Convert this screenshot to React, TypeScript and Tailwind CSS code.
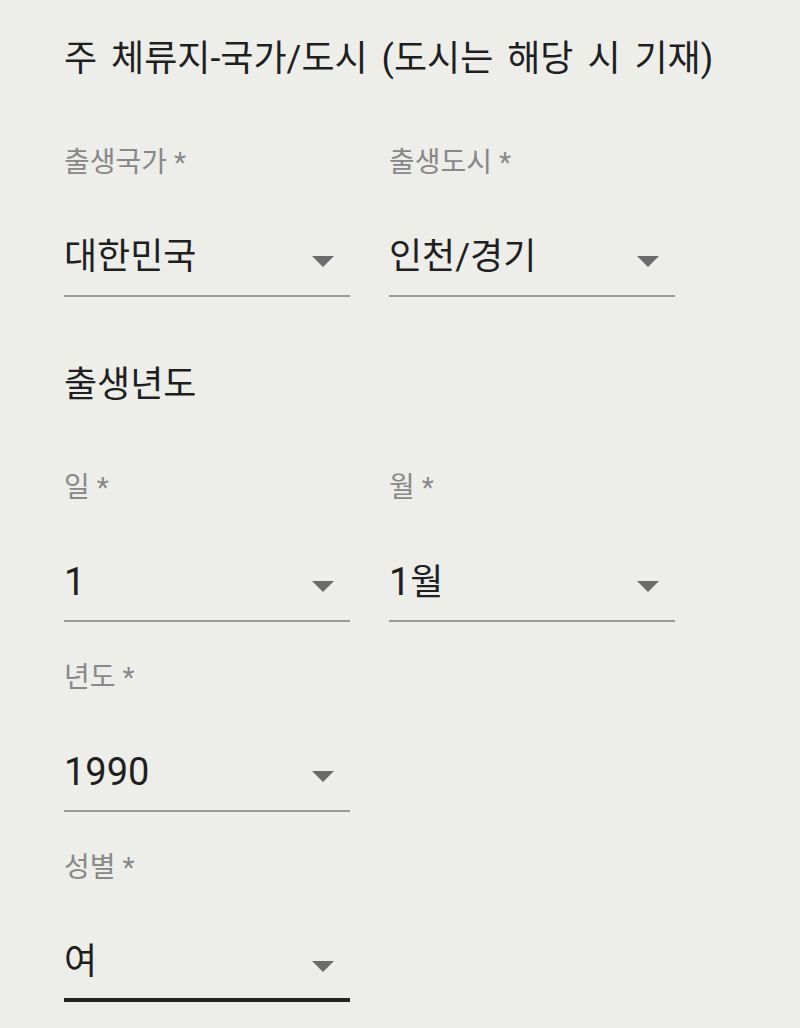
import React from "react";

const Arrow = () => (
  <svg width="22" height="11" viewBox="0 0 22 11" className="translate-y-[4px] shrink-0">
    <path d="M0 0H22L11 11Z" fill="#6b6b6b" />
  </svg>
);

type FieldProps = { label: string; value: React.ReactNode; last?: boolean };

const Field = ({ label, value, last }: FieldProps) => (
  <div className="w-[286px] flex flex-col">
    <div className="h-[30px] leading-[30px] text-[28px] text-[#888888] whitespace-nowrap">
      {label} *
    </div>
    <div className="mt-[59px] h-[40px] flex items-center justify-between pr-[16px]">
      <span className="text-[36px] leading-[40px] text-[#1f1f1f] whitespace-nowrap">{value}</span>
      <Arrow />
    </div>
    <div
      className={
        last ? "mt-[16px] h-[4px] bg-[#222222]" : "mt-[18px] h-[2px] bg-[#9c9c9a]"
      }
    />
  </div>
);

export default function App() {
  return (
    <div className="min-h-screen bg-[#ededea] pl-[64px] pt-[39px] font-['Roboto','Noto_Sans_CJK_KR',sans-serif]">
      <div className="h-[40px] leading-[40px] text-[36px] text-[#1f1f1f] whitespace-nowrap [word-spacing:5px]">
        주 체류지-국가/도시 (도시는 해당 시 기재)
      </div>
      <div className="mt-[69px] flex gap-[39px]">
        <Field label="출생국가" value="대한민국" />
        <Field label="출생도시" value="인천/경기" />
      </div>
      <div className="mt-[68px] h-[40px] leading-[40px] text-[36px] text-[#1f1f1f]">출생년도</div>
      <div className="mt-[68px] flex gap-[39px]">
        <Field label="일" value={<span className="text-[38px]">1</span>} />
        <Field
          label="월"
          value={
            <>
              <span className="text-[38px]">1</span>월
            </>
          }
        />
      </div>
      <div className="mt-[41px]">
        <Field label="년도" value={<span className="text-[38px]">1990</span>} />
      </div>
      <div className="mt-[41px]">
        <Field label="성별" value="여" last />
      </div>
    </div>
  );
}
